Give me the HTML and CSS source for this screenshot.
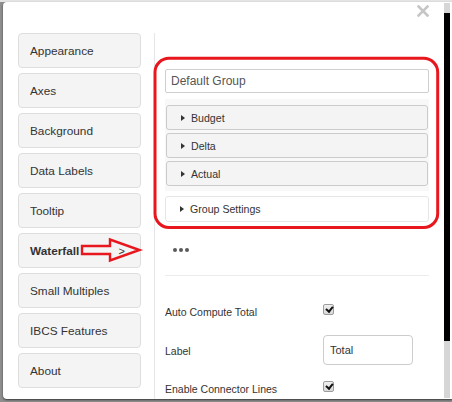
FILE: index.html
```html
<!DOCTYPE html>
<html lang="en">
<head>
    <meta charset="UTF-8">
    <title>Waterfall Settings</title>
    <link rel="stylesheet" href="styles.css">
</head>
<body>
    <div class="modal">
        <svg class="close" width="12" height="12" viewBox="0 0 12 12">
            <path d="M1.5 1.5 L10.5 10.5 M10.5 1.5 L1.5 10.5" stroke="#c6c6c6" stroke-width="2.6" stroke-linecap="square"/>
        </svg>

        <div class="layout">
            <div class="nav">
                <div class="nav-item">Appearance</div>
                <div class="nav-item">Axes</div>
                <div class="nav-item">Background</div>
                <div class="nav-item">Data Labels</div>
                <div class="nav-item">Tooltip</div>
                <div class="nav-item active"><span>Waterfall</span><span class="chev">&gt;</span></div>
                <div class="nav-item">Small Multiples</div>
                <div class="nav-item">IBCS Features</div>
                <div class="nav-item">About</div>
            </div>

            <div class="content">
                <div class="group-name">Default Group</div>
                <div class="series-list">
                    <div class="series"><span class="caret"></span>Budget</div>
                    <div class="series"><span class="caret"></span>Delta</div>
                    <div class="series"><span class="caret"></span>Actual</div>
                </div>
                <div class="group-settings"><span class="caret"></span>Group Settings</div>

                <div class="dots"><span></span><span></span><span></span></div>

                <div class="options">
                    <div class="option">
                        <span class="option-label">Auto Compute Total</span>
                        <span class="check"></span>
                    </div>
                    <div class="option">
                        <span class="option-label">Label</span>
                        <div class="text-input">Total</div>
                    </div>
                    <div class="option">
                        <span class="option-label">Enable Connector Lines</span>
                        <span class="check"></span>
                    </div>
                </div>
            </div>
        </div>

        <div class="scrollbar"><div class="thumb"></div></div>

        <!-- red annotation marks drawn over the dialog -->
        <svg class="marks" width="449" height="397" viewBox="3 2 449 397">
            <rect x="155" y="58.3" width="282.7" height="169.2" rx="14" fill="none" stroke="#e8161d" stroke-width="3"/>
            <path d="M82 246 L110 246 L110 239.5 L139.5 250 L110 260.5 L110 254 L82 254 Z" fill="none" stroke="#e8161d" stroke-width="2.4" stroke-linejoin="miter"/>
        </svg>
    </div>
</body>
</html>
```

FILE: styles.css
```css
body {
    margin: 0;
    padding: 2px 0 0 3px;
    height: 402px;
    box-sizing: border-box;
    overflow: hidden;
    background: linear-gradient(#e4e4e4 0 2px, #8e8e8e 2px);
    font-family: 'Liberation Sans', Arial, sans-serif;
    color: #333;
}
.modal {
    position: relative;
    width: 449px;
    height: 397px;
    background: #fff;
    border-radius: 4px 0 0 4px;
    box-shadow: 0 1px 2px rgba(0, 0, 0, 0.6);
    overflow: hidden;
}
.close {
    position: absolute;
    top: 3px;
    left: 414px;
}
.layout {
    display: flex;
    height: 100%;
    box-sizing: border-box;
    padding: 31px 0 0 15px;
}
.nav {
    width: 123px;
    display: flex;
    flex-direction: column;
    gap: 5px;
}
.nav-item {
    height: 35px;
    box-sizing: border-box;
    display: flex;
    align-items: center;
    justify-content: space-between;
    padding: 0 15px 0 11px;
    background: #f4f4f4;
    border: 1px solid #dedede;
    border-radius: 4px;
    font-size: 11.8px;
}
.nav-item.active {
    font-weight: bold;
}
.nav-item .chev {
    font-weight: normal;
    font-size: 11px;
}
.content {
    margin-left: 13px;
    border-left: 1px solid #e6e6e6;
    padding: 36px 0 0 10px;
    width: 264px;
}
.group-name {
    height: 24px;
    box-sizing: border-box;
    border: 1px solid #cfcfcf;
    border-radius: 2px;
    padding-left: 5px;
    display: flex;
    align-items: center;
    font-size: 12px;
    color: #555;
}
.series-list {
    margin-top: 6px;
    background: #f8f8f8;
    padding: 6px 1px 5px;
    display: flex;
    flex-direction: column;
    gap: 3px;
}
.series {
    height: 25px;
    box-sizing: border-box;
    background: #f4f4f4;
    border: 1px solid #cbcbcb;
    border-radius: 3px;
    padding-left: 14px;
    display: flex;
    align-items: center;
    font-size: 10.6px;
}
.group-settings {
    margin-top: 5px;
    height: 26px;
    box-sizing: border-box;
    border: 1px solid #e6e6e6;
    border-radius: 3px;
    padding-left: 14px;
    display: flex;
    align-items: center;
    font-size: 10.6px;
}
.caret {
    width: 0;
    height: 0;
    border-left: 4px solid #333;
    border-top: 3px solid transparent;
    border-bottom: 3px solid transparent;
    margin-right: 6px;
}
.dots {
    margin-top: 26px;
    padding-left: 8px;
    display: flex;
    gap: 2px;
}
.dots span {
    width: 4px;
    height: 4px;
    border-radius: 50%;
    background: #5a5a5a;
}
.options {
    margin-top: 23px;
    border-top: 1px solid #ececec;
    padding-top: 21px;
    display: flex;
    flex-direction: column;
    gap: 8.5px;
}
.option {
    height: 30px;
    display: flex;
    align-items: center;
    font-size: 10.5px;
}
.option-label {
    width: 158px;
}
.check {
    width: 11px;
    height: 11px;
    box-sizing: border-box;
    margin-bottom: 6px;
    border: 1px solid #9c9c9c;
    border-radius: 2px;
    background: linear-gradient(#f0f0f0, #d8d8d8);
    position: relative;
}
.check::after {
    content: "";
    position: absolute;
    left: 3px;
    top: 0px;
    width: 2.5px;
    height: 5px;
    border: solid #111;
    border-width: 0 2px 2px 0;
    transform: rotate(40deg);
}
.text-input {
    width: 90px;
    height: 30px;
    box-sizing: border-box;
    border: 1px solid #cccccc;
    border-radius: 4px;
    padding-left: 6px;
    display: flex;
    align-items: center;
    font-size: 11px;
    margin-top: -2px;
}
.scrollbar {
    position: absolute;
    left: 441px;
    top: 1px;
    width: 6px;
    height: 395px;
    background: #d6d6d6;
}
.thumb {
    margin-top: 10px;
    height: 328px;
    background: #000;
}
.marks {
    position: absolute;
    left: 0;
    top: 0;
    pointer-events: none;
}
```
